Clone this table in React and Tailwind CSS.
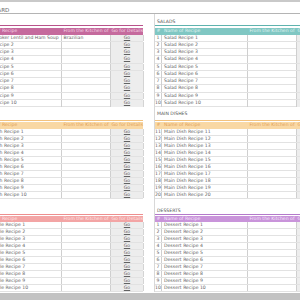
import React from 'react';

const GRID_R = 'grid grid-cols-[7px_86px_49px_33px]';
const GRID_L = 'grid grid-cols-[7px_83px_49px_33px]';

const themes = {
  soup: { line: 'bg-[#b9538b]', head: 'bg-[#c56a9d] text-[#f6d9e8]' },
  side: { line: 'bg-[#f3c27e]', head: 'bg-[#f9d8a4] text-[#df9f58]' },
  veg: { line: 'bg-[#ee8e8e]', head: 'bg-[#f3a5a5] text-[#fde4e4]' },
  salad: { line: 'bg-[#5fb3ae]', head: 'bg-[#80c7c3] text-[#e2f4f2]' },
  main: { line: 'bg-[#f3c27e]', head: 'bg-[#f9d8a4] text-[#df9f58]' },
  dessert: { line: 'bg-[#b479cb]', head: 'bg-[#c994da] text-[#f5e8fa]' },
};

const make = (prefix, start, first) =>
  Array.from({ length: 10 }, (_, i) => {
    const n = start + i;
    if (i === 0 && first) return [n, first[0], first[1]];
    return [n, `${prefix} ${n}`, ''];
  });

function Section({ grid, label, theme, rows, labelCls, gapCls, headCls, rowCls }) {
  const t = themes[theme];
  return (
    <div className="flex flex-col">
      <div className={`${labelCls} pl-[2px] text-[#555555] leading-[4px] whitespace-nowrap`}>{label}</div>
      <div className={`h-[1px] ${t.line}`} />
      <div className={gapCls} />
      <div className={`${grid} ${headCls} ${t.head} items-center leading-[6px] whitespace-nowrap`}>
        <div className="flex justify-center">#</div>
        <div className="pl-[2px] overflow-hidden">Name of Recipe</div>
        <div className="pl-[1.5px] overflow-hidden">From the Kitchen of</div>
        <div className="pl-[0.5px] overflow-hidden">Go for Details</div>
      </div>
      {rows.map(([n, name, kitchen]) => (
        <div key={n} className={`${grid} ${rowCls} border-b border-[#e2e2e2] text-[#626262] whitespace-nowrap`}>
          <div className="border-r border-[#cfcfcf] flex items-center justify-center">{n}</div>
          <div className="border-r border-[#cfcfcf] flex items-center pl-[2px] overflow-hidden">{name}</div>
          <div className="border-r border-[#cfcfcf] flex items-center pl-[1.5px] overflow-hidden">{kitchen}</div>
          <div className="bg-[#ededed] border-r border-[#d4d4d4] flex items-center justify-center">
            <span className="underline">Go</span>
          </div>
        </div>
      ))}
    </div>
  );
}

function Column({ sections, grid, width }) {
  return (
    <div className={`flex flex-col ${width} border-l border-[#d8d8d8]`}>
      <Section grid={grid} {...sections[0]} labelCls="h-[11px] pt-[6px]" gapCls="h-[1.5px]" headCls="h-[7px]" rowCls="h-[7.25px]" />
      <Section grid={grid} {...sections[1]} labelCls="h-[12.5px] pt-[5px]" gapCls="h-[1px]" headCls="h-[7px]" rowCls="h-[7px]" />
      <Section grid={grid} {...sections[2]} labelCls="h-[15px] pt-[10.5px]" gapCls="h-[1px]" headCls="h-[6px]" rowCls="h-[7px]" />
    </div>
  );
}

const left = [
  { label: 'SOUPS', theme: 'soup', rows: make('Soup Recipe', 1, ['Slow Cooker Lentil and Ham Soup', 'Brazilian']) },
  { label: 'SIDES', theme: 'side', rows: make('Side Dish Recipe', 1) },
  { label: 'VEGGIES', theme: 'veg', rows: make('Vegetable Recipe', 1) },
];

const right = [
  { label: 'SALADS', theme: 'salad', rows: make('Salad Recipe', 1) },
  { label: 'MAIN DISHES', theme: 'main', rows: make('Main Dish Recipe', 11) },
  { label: 'DESSERTS', theme: 'dessert', rows: make('Dessert Recipe', 1) },
];

export default function App() {
  return (
    <div className="w-[300px] h-[300px] overflow-hidden bg-white flex flex-col font-['DejaVu_Sans',sans-serif] text-[4.6px]">
      <div className="h-[2px] shrink-0 bg-[#c9c9c9]" />
      <div className="h-[12px] shrink-0 border-b border-[#b4b4b4] flex overflow-hidden">
        <div className="pl-[5.5px] pt-[5.4px] -ml-[32px] text-[5.6px] leading-[6px] text-[#6a6a6a] whitespace-nowrap">DASHBOARD</div>
      </div>
      <div className="flex-1 flex overflow-hidden">
        <div className="w-[144px] shrink-0 overflow-hidden flex">
          <div className="-ml-[29px] shrink-0">
            <Column sections={left} grid={GRID_L} width="w-[172px]" />
          </div>
        </div>
        <div className="ml-[10px] shrink-0">
          <Column sections={right} grid={GRID_R} width="w-[175px]" />
        </div>
      </div>
      <div className="h-[7px] shrink-0 bg-[#c2c2c2]" />
    </div>
  );
}
